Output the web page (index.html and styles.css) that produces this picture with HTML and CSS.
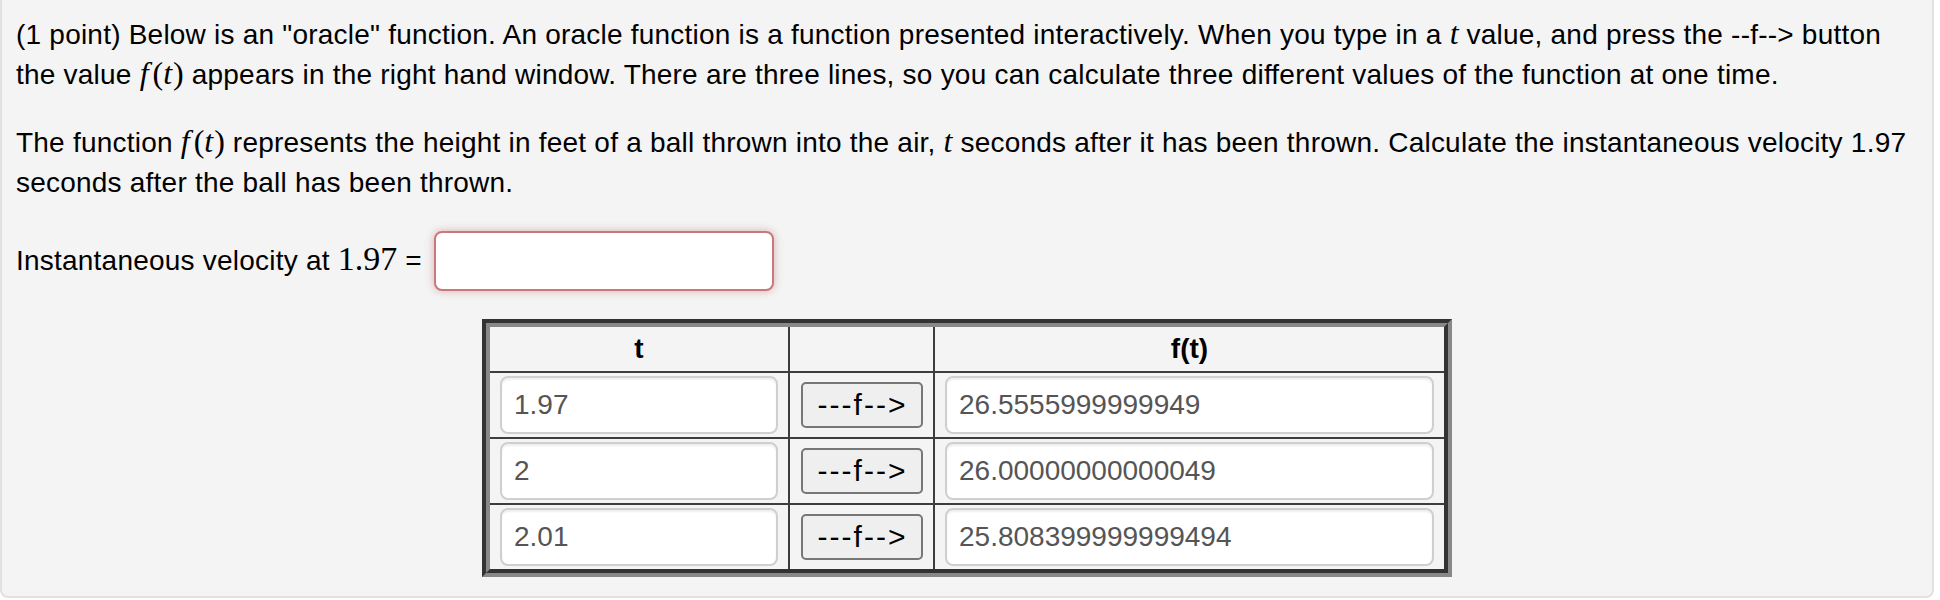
FILE: index.html
```html
<!DOCTYPE html>
<html lang="en">
<head>
<meta charset="utf-8">
<title>Oracle function</title>
<link rel="stylesheet" href="styles.css">
</head>
<body>
<div class="panel">
  <p class="para">(1 point) Below is an "oracle" function. An oracle function is a function presented interactively. When you type in a <span class="mi">t</span> value, and press the --f--&gt; button<br>the value <span class="math"><span class="mi">f</span><span class="mo">(</span><span class="mi">t</span><span class="mo">)</span></span> appears in the right hand window. There are three lines, so you can calculate three different values of the function at one time.</p>
  <p class="para">The function <span class="math"><span class="mi">f</span><span class="mo">(</span><span class="mi">t</span><span class="mo">)</span></span> represents the height in feet of a ball thrown into the air, <span class="mi">t</span> seconds after it has been thrown. Calculate the instantaneous velocity 1.97<br>seconds after the ball has been thrown.</p>
  <div class="answer-row">
    <span class="label">Instantaneous velocity at <span class="mn">1.97</span> =</span>
    <input class="answer" type="text" value="">
  </div>
  <div class="oracle-wrap">
    <div class="oracle-frame">
      <table class="oracle">
        <colgroup><col class="c1"><col class="c2"><col class="c3"></colgroup>
        <thead>
          <tr><th class="b-right">t</th><th class="b-right"></th><th>f(t)</th></tr>
        </thead>
        <tbody>
          <tr>
            <td class="b-right"><input class="cell-input" type="text" value="1.97"></td>
            <td class="b-right"><button class="fbtn" type="button">---f--&gt;</button></td>
            <td><input class="cell-input" type="text" value="26.5555999999949"></td>
          </tr>
          <tr>
            <td class="b-right"><input class="cell-input" type="text" value="2"></td>
            <td class="b-right"><button class="fbtn" type="button">---f--&gt;</button></td>
            <td><input class="cell-input" type="text" value="26.00000000000049"></td>
          </tr>
          <tr>
            <td class="b-right"><input class="cell-input" type="text" value="2.01"></td>
            <td class="b-right"><button class="fbtn" type="button">---f--&gt;</button></td>
            <td><input class="cell-input" type="text" value="25.808399999999494"></td>
          </tr>
        </tbody>
      </table>
    </div>
  </div>
</div>
</body>
</html>
```
FILE: styles.css
```css
* {
  box-sizing: border-box;
}

body {
  margin: 0;
  background: #ffffff;
  font-family: "Liberation Sans", Arial, sans-serif;
}

.panel {
  width: 1934px;
  background: #f4f4f4;
  border: 2px solid #e1e1e1;
  border-top: 0;
  border-radius: 0 0 8px 8px;
  padding: 15px 14px 19px 14px;
  font-size: 28px;
  line-height: 40px;
  color: #000;
}

.para {
  margin: 0 0 28px 0;
  letter-spacing: 0.22px;
}

.mi {
  font-family: "Liberation Serif", "Times New Roman", serif;
  font-style: italic;
  font-size: 32px;
  line-height: 1;
  letter-spacing: 0;
}

.mo,
.mn {
  font-family: "Liberation Serif", "Times New Roman", serif;
  font-size: 32px;
  line-height: 1;
  letter-spacing: 0;
}

.mn {
  font-size: 34px;
}

.math .mi:first-child {
  margin-right: 3px;
}

.math .mo {
  margin-left: 1px;
}

.answer-row {
  display: flex;
  align-items: center;
  height: 60px;
  margin-bottom: 28px;
}

.label {
  margin-right: 12px;
  letter-spacing: 0.22px;
}

.answer {
  width: 340px;
  height: 60px;
  border: 2px solid #c87a7a;
  border-radius: 8px;
  background: #fff;
  box-shadow: 0 0 9px rgba(190, 90, 90, 0.45);
  font-size: 28px;
  outline: none;
}

.oracle-wrap {
  display: flex;
  justify-content: center;
}

.oracle-frame {
  border: 4px solid;
  border-color: #333 #888 #888 #333;
}

.oracle {
  border: 4px solid;
  border-color: #888 #333 #333 #888;
  border-collapse: separate;
  border-spacing: 0;
  table-layout: fixed;
  width: 962px;
}

.c1 { width: 300px; }
.c2 { width: 145px; }
.c3 { width: 509px; }

.oracle th {
  height: 46px;
  padding: 0;
  font-weight: bold;
  text-align: center;
  border-bottom: 2px solid #3d3d3d;
  line-height: 40px;
}

.oracle td {
  padding: 3px 10px;
  border-bottom: 2px solid #3d3d3d;
  vertical-align: middle;
}

.oracle tbody tr:last-child td {
  border-bottom: 0;
}

.oracle .b-right {
  border-right: 2px solid #3d3d3d;
}

.cell-input {
  display: block;
  width: 100%;
  height: 58px;
  border: 2px solid #cfcfcf;
  border-radius: 8px;
  background: #fff;
  box-shadow: inset 0 2px 2px rgba(0, 0, 0, 0.07);
  padding: 0 12px;
  font-family: "Liberation Sans", Arial, sans-serif;
  font-size: 28px;
  color: #555;
  outline: none;
}

.fbtn {
  display: block;
  width: 122px;
  height: 46px;
  margin: 0 auto;
  padding: 0 0 0 2px;
  border: 2px solid #777;
  border-radius: 5px;
  background: #efefef;
  font-family: "Liberation Sans", Arial, sans-serif;
  font-size: 30px;
  letter-spacing: 2px;
  color: #000;
}
```
